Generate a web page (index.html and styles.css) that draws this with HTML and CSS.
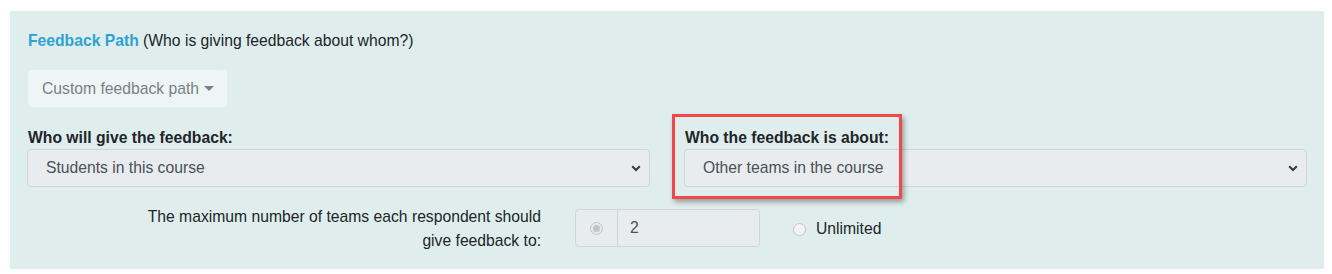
FILE: index.html
```html
<!DOCTYPE html>
<html>
<head>
<meta charset="utf-8">
<link rel="stylesheet" href="styles.css">
</head>
<body>
<div class="panel">
  <div class="title"><span class="title-main">Feedback Path</span> (Who is giving feedback about whom?)</div>
  <div class="btn-wrap">
    <span class="btn">Custom feedback path<span class="caret"></span></span>
  </div>
  <div class="cols">
    <div class="col">
      <div class="label">Who will give the feedback:</div>
      <div class="select"><span>Students in this course</span>
        <svg class="chev" width="10" height="7" viewBox="0 0 10 7"><path d="M1.2 1.2 L5 5 L8.8 1.2" fill="none" stroke="#343a40" stroke-width="2"/></svg>
      </div>
    </div>
    <div class="col">
      <div class="label">Who the feedback is about:</div>
      <div class="select"><span>Other teams in the course</span>
        <svg class="chev" width="10" height="7" viewBox="0 0 10 7"><path d="M1.2 1.2 L5 5 L8.8 1.2" fill="none" stroke="#343a40" stroke-width="2"/></svg>
      </div>
    </div>
  </div>
  <div class="limit-row">
    <div class="limit-label">The maximum number of teams each respondent should give feedback to:</div>
    <div class="input-group">
      <div class="prepend"><span class="radio checked"><span class="dot"></span></span></div>
      <div class="input">2</div>
    </div>
    <div class="unlimited"><span class="radio"></span><span>Unlimited</span></div>
  </div>
  <div class="highlight"></div>
</div>
</body>
</html>
```

FILE: styles.css
```css
html, body {
  margin: 0;
  padding: 0;
  background: #ffffff;
}
body {
  font-family: "Liberation Sans", Arial, sans-serif;
  font-size: 15.7px;
  line-height: 24px;
  color: #212529;
}
.panel {
  position: relative;
  margin: 11px 0 0 10px;
  width: 1314px;
  box-sizing: border-box;
  padding: 18px 17px 16px 17px;
  background: #e0eded;
}
.title {
  padding-left: 1px;
}
.title-main {
  font-weight: bold;
  color: #2fa2d4;
}
.btn-wrap {
  margin-top: 17px;
  display: flex;
}
.btn {
  display: inline-flex;
  align-items: center;
  padding: 6px 13px 6px 14px;
  margin-left: 1px;
  height: 37px;
  box-sizing: border-box;
  background: #eef5f5;
  border-radius: 4px;
  color: #7b8086;
}
.caret {
  display: inline-block;
  width: 0;
  height: 0;
  margin-left: 5px;
  border-left: 5px solid transparent;
  border-right: 5px solid transparent;
  border-top: 5px solid #7b8086;
}
.cols {
  margin-top: 17px;
  display: grid;
  grid-template-columns: 623px 623px;
  column-gap: 34px;
}
.label {
  font-weight: bold;
  padding-left: 1px;
  padding-top: 2px;
  margin-bottom: -1px;
}
.select {
  display: flex;
  align-items: center;
  justify-content: space-between;
  height: 38px;
  box-sizing: border-box;
  padding: 0 8px 0 18px;
  background: #e9ecef;
  border: 1px solid #ced4da;
  border-radius: 4px;
  color: #495057;
}
.chev {
  display: block;
}
.limit-row {
  margin-top: 18px;
  display: flex;
  align-items: flex-start;
}
.limit-label {
  width: 514px;
  box-sizing: border-box;
  padding-left: 100px;
  text-align: right;
}
.input-group {
  margin-left: 34px;
  margin-top: 4px;
  width: 185px;
  height: 38px;
  display: flex;
  box-sizing: border-box;
  border: 1px solid #ced4da;
  border-radius: 4px;
  background: #e9ecef;
}
.prepend {
  width: 41px;
  display: flex;
  align-items: center;
  justify-content: center;
  border-right: 1px solid #ced4da;
}
.input {
  flex: 1;
  padding: 6px 12px;
  color: #495057;
}
.radio {
  width: 13px;
  height: 13px;
  box-sizing: border-box;
  border-radius: 50%;
  border: 1px solid #c4c4c4;
  background: #f3f3f3;
  display: inline-flex;
  align-items: center;
  justify-content: center;
}
.radio.checked {
  background: #e8e8e8;
}
.dot {
  width: 7px;
  height: 7px;
  border-radius: 50%;
  background: #c3c3c3;
}
.unlimited {
  margin-left: 33px;
  margin-top: 12px;
  display: flex;
  align-items: center;
  gap: 10px;
}
.highlight {
  position: absolute;
  left: 662px;
  top: 103px;
  width: 230px;
  height: 85px;
  box-sizing: border-box;
  border: 3px solid #f4474a;
  box-shadow: 2px 3px 5px rgba(0, 0, 0, 0.35);
}
```
